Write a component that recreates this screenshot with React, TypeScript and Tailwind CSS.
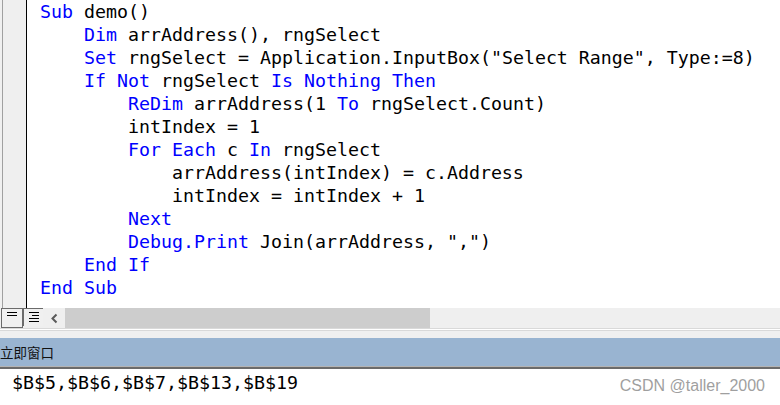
import React from "react";

type Seg = { t: string; k?: boolean };

const lines: { indent: number; segs: Seg[] }[] = [
  { indent: 0, segs: [{ t: "Sub", k: true }, { t: " demo()" }] },
  { indent: 4, segs: [{ t: "Dim", k: true }, { t: " arrAddress(), rngSelect" }] },
  { indent: 4, segs: [{ t: "Set", k: true }, { t: ' rngSelect = Application.InputBox("Select Range", Type:=8)' }] },
  {
    indent: 4,
    segs: [
      { t: "If Not", k: true },
      { t: " rngSelect " },
      { t: "Is Nothing Then", k: true },
    ],
  },
  {
    indent: 8,
    segs: [
      { t: "ReDim", k: true },
      { t: " arrAddress(1 " },
      { t: "To", k: true },
      { t: " rngSelect.Count)" },
    ],
  },
  { indent: 8, segs: [{ t: "intIndex = 1" }] },
  {
    indent: 8,
    segs: [
      { t: "For Each", k: true },
      { t: " c " },
      { t: "In", k: true },
      { t: " rngSelect" },
    ],
  },
  { indent: 12, segs: [{ t: "arrAddress(intIndex) = c.Address" }] },
  { indent: 12, segs: [{ t: "intIndex = intIndex + 1" }] },
  { indent: 8, segs: [{ t: "Next", k: true }] },
  { indent: 8, segs: [{ t: "Debug.Print", k: true }, { t: ' Join(arrAddress, ",")' }] },
  { indent: 4, segs: [{ t: "End If", k: true }] },
  { indent: 0, segs: [{ t: "End Sub", k: true }] },
];

function CodeLine({ indent, segs }: { indent: number; segs: Seg[] }) {
  return (
    <div className="h-[23px] whitespace-pre">
      {" ".repeat(indent)}
      {segs.map((s, i) => (
        <span key={i} className={s.k ? "text-[#0000ff]" : "text-black"}>
          {s.t}
        </span>
      ))}
    </div>
  );
}

export default function App() {
  return (
    <div className="w-[780px] h-[405px] bg-white flex flex-col overflow-hidden">
      {/* code window */}
      <div className="flex h-[308px]">
        <div className="bg-[#f0f0f0] pl-[2px] flex">
          <div className="w-[25px] bg-[#efefef] border-l border-[#a0a0a0] border-r border-r-black" />
        </div>
        <div className="flex-1 pl-[13px] font-['DejaVu_Sans_Mono',monospace] text-[18.27px] leading-[23px]">
          {lines.map((l, i) => (
            <CodeLine key={i} indent={l.indent} segs={l.segs} />
          ))}
        </div>
      </div>

      {/* view buttons + horizontal scrollbar */}
      <div className="flex h-[20px] bg-[#efefef]">
        <div className="w-[1px] bg-[#f0f0f0]" />
        <div className="w-[22px] h-[20px] border border-[#6b6b6b] bg-[#f0f0f0] flex justify-center pt-[2px]">
          <svg width="12" height="8" viewBox="0 0 12 8">
            <path d="M1 1.5h10M1 4.5h10" stroke="#000" strokeWidth="1" />
          </svg>
        </div>
        <div className="w-[20px] h-[18px] border-l border-t border-[#6b6b6b] bg-[#f0f0f0] flex justify-center pt-[3px]">
          <svg width="12" height="11" viewBox="0 0 12 11">
            <path d="M1 0.5h10M4 3.5h7M1 6.5h10M1 9.5h10" stroke="#000" strokeWidth="1" />
          </svg>
        </div>
        <div className="w-[22px] flex items-center justify-center">
          <svg width="9" height="11" viewBox="0 0 9 11">
            <path d="M6.5 1.5L2.5 5.5l4 4" stroke="#5a5a5a" strokeWidth="2" fill="none" />
          </svg>
        </div>
        <div className="w-[365px] bg-[#cdcdcd]" />
        <div className="flex-1" />
      </div>

      {/* splitter */}
      <div className="h-px bg-[#d9d9d9]" />
      <div className="h-px bg-white" />
      <div className="h-px bg-[#d9d9d9]" />
      <div className="h-[7px] bg-[#f0f0f0]" />

      {/* immediate window title */}
      <div className="h-[28px] bg-[#99b4d1] flex items-center text-[13.5px] text-[#111] font-['Noto_Sans_CJK_SC',sans-serif]">
        立即窗口
      </div>
      <div className="h-px bg-[#b4b4b4]" />
      <div className="h-[2px] bg-[#6b6b6b]" />

      {/* immediate window output */}
      <div className="flex-1 flex items-start justify-between pt-[2px]">
        <div className="pl-[12px] font-['DejaVu_Sans_Mono',monospace] text-[18.27px] leading-[23px] text-black whitespace-pre">
          $B$5,$B$6,$B$7,$B$13,$B$19
        </div>
        <div className="pr-[15px] pt-[5px] font-['Liberation_Sans',Arial,sans-serif] text-[16px] leading-[20px] text-[#9f9f9f]">
          CSDN @taller_2000
        </div>
      </div>
    </div>
  );
}
